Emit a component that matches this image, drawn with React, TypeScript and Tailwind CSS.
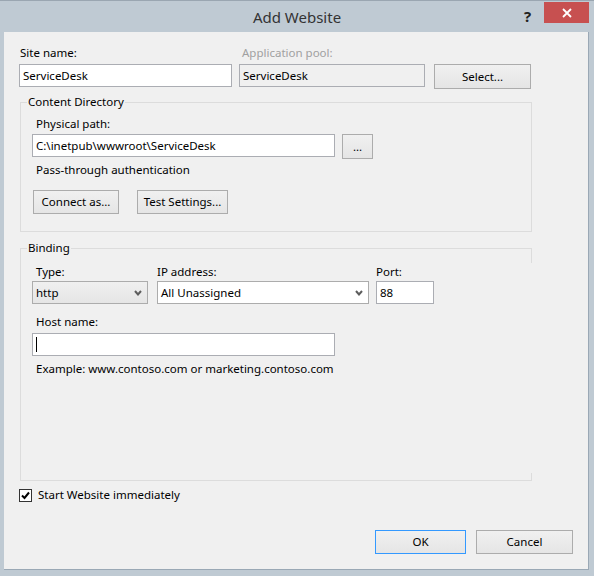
import React from "react";

const font = { fontFamily: '"Noto Sans", "Segoe UI", Arial, sans-serif' };

function TextBox({
  value,
  width,
  readOnly,
  caret,
}: {
  value?: string;
  width: string;
  readOnly?: boolean;
  caret?: boolean;
}) {
  return (
    <div
      className={`${width} flex h-[23px] items-center border border-[#abadb3] pl-[3px] text-[11.5px] leading-[16px] text-black ${
        readOnly ? "bg-[#f0f0f0]" : "bg-white"
      }`}
    >
      {caret && <span className="h-[15px] w-px bg-black" />}
      {value}
    </div>
  );
}

function Chevron() {
  return (
    <svg width="8" height="6" viewBox="0 0 8 6" className="shrink-0">
      <polyline points="1,1 4,4.5 7,1" fill="none" stroke="#5d5d5d" strokeWidth="2" />
    </svg>
  );
}

function Combo({ value, width, gray }: { value: string; width: string; gray?: boolean }) {
  return (
    <div
      className={`${width} flex h-[23px] items-center justify-between border border-[#acacac] pl-[3px] pr-[5px] text-[11.5px] leading-[16px] text-black ${
        gray ? "bg-gradient-to-b from-[#f0f0f0] to-[#e5e5e5]" : "bg-white"
      }`}
    >
      <span className="pt-px">{value}</span>
      <Chevron />
    </div>
  );
}

function Button({
  children,
  width,
  height = "h-[24px]",
  focused,
}: {
  children: React.ReactNode;
  width: string;
  height?: string;
  focused?: boolean;
}) {
  return (
    <div
      className={`${width} ${height} flex items-center justify-center border bg-gradient-to-b from-[#f0f0f0] to-[#e5e5e5] text-[11.5px] leading-[16px] text-black ${
        focused ? "border-[#3399ff]" : "border-[#acacac]"
      }`}
    >
      {children}
    </div>
  );
}

function Label({
  children,
  className = "",
  muted,
}: {
  children: React.ReactNode;
  className?: string;
  muted?: boolean;
}) {
  return (
    <div
      className={`h-[16px] text-[11.5px] leading-[16px] ${muted ? "text-[#a0a0a0]" : "text-black"} ${className}`}
    >
      {children}
    </div>
  );
}

export default function App() {
  return (
    <div className="h-[576px] w-[594px] overflow-hidden border-t border-[#9aa6b1] bg-[#bfcad3]" style={font}>
      {/* title bar */}
      <div className="relative flex h-[31px] items-center justify-center">
        <span className="pt-[2px] text-[15px] text-[#333]">Add Website</span>
        <span className="absolute left-[524px] top-[4px] text-[15px] font-bold text-[#222]">?</span>
        <div className="absolute left-[544px] top-[1px] flex h-[21px] w-[45px] items-center justify-center bg-[#c75050]">
          <svg width="10" height="10" viewBox="0 0 10 10">
            <path d="M1 1 L9 9 M9 1 L1 9" stroke="white" strokeWidth="1.8" />
          </svg>
        </div>
      </div>

      {/* client area */}
      <div className="ml-[4px] flex h-[538px] w-[585px] flex-col border-r border-b border-[#9aa8b5] bg-[#f0f0f0]">
        {/* site name / app pool */}
        <div className="mt-[13px] flex items-start">
          <div className="ml-[15px] flex flex-col">
            <Label className="mb-[3px] pl-px">Site name:</Label>
            <TextBox value="ServiceDesk" width="w-[213px]" />
          </div>
          <div className="ml-[7px] flex flex-col">
            <Label className="mb-[3px] pl-[3px]" muted>
              Application pool:
            </Label>
            <TextBox value="ServiceDesk" width="w-[186px]" readOnly />
          </div>
          <div className="ml-[9px] mt-[19px]">
            <Button width="w-[97px]" height="h-[25px]">Select...</Button>
          </div>
        </div>

        {/* content directory */}
        <fieldset className="ml-[16px] mt-[5px] w-[512px] border border-[#dcdcdc] pb-[17px]">
          <legend className="ml-[6px] px-px text-[11.5px] leading-[16px] text-black">Content Directory</legend>
          <Label className="ml-[15px] mt-[6px]">Physical path:</Label>
          <div className="ml-[11px] mt-[2px] flex items-start">
            <TextBox value="C:\inetpub\wwwroot\ServiceDesk" width="w-[303px]" />
            <div className="ml-[7px]">
              <Button width="w-[31px]" height="h-[25px]">...</Button>
            </div>
          </div>
          <Label className="ml-[15px] mt-[3px]">Pass-through authentication</Label>
          <div className="ml-[12px] mt-[12px] flex">
            <Button width="w-[86px]">Connect as...</Button>
            <div className="ml-[18px]">
              <Button width="w-[91px]">Test Settings...</Button>
            </div>
          </div>
        </fieldset>

        {/* binding */}
        <div className="relative ml-[16px] mt-[8px] w-[512px]">
          <fieldset className="border border-r-0 border-[#dcdcdc] pb-[103px]">
            <legend className="ml-[6px] px-px text-[11.5px] leading-[16px] text-black">Binding</legend>
            <div className="ml-[11px] mt-[8px] flex items-start">
              <div className="flex flex-col">
                <Label className="mb-px pl-[4px]">Type:</Label>
                <Combo value="http" width="w-[116px]" gray />
              </div>
              <div className="ml-[9px] flex flex-col">
                <Label className="mb-px">IP address:</Label>
                <Combo value="All Unassigned" width="w-[212px]" />
              </div>
              <div className="ml-[7px] flex flex-col">
                <Label className="mb-px">Port:</Label>
                <TextBox value="88" width="w-[58px]" />
              </div>
            </div>
            <Label className="ml-[15px] mt-[10px]">Host name:</Label>
            <div className="ml-[11px] mt-[3px]">
              <TextBox width="w-[303px]" caret />
            </div>
            <Label className="ml-[15px] mt-[5px]">Example: www.contoso.com or marketing.contoso.com</Label>
          </fieldset>
          {/* the right edge of this box is only painted at its corners */}
          <div className="absolute right-0 top-[8px] h-[15px] w-px bg-[#dcdcdc]" />
          <div className="absolute bottom-0 right-0 h-[8px] w-px bg-[#dcdcdc]" />
        </div>

        {/* start immediately */}
        <div className="ml-[15px] mt-[6px] flex h-[16px] items-center">
          <div className="flex h-[13px] w-[13px] items-center justify-center border border-[#333] bg-white">
            <svg width="9" height="9" viewBox="0 0 9 9">
              <path d="M1 4.5 L3.5 7 L8 1.5" fill="none" stroke="#000" strokeWidth="2" />
            </svg>
          </div>
          <span className="ml-[6px] text-[11.5px] leading-[16px] text-black">Start Website immediately</span>
        </div>

        {/* dialog buttons */}
        <div className="mt-[27px] flex justify-end pr-[15px]">
          <Button width="w-[91px]" focused>OK</Button>
          <div className="ml-[10px]">
            <Button width="w-[97px]">Cancel</Button>
          </div>
        </div>
      </div>
    </div>
  );
}
